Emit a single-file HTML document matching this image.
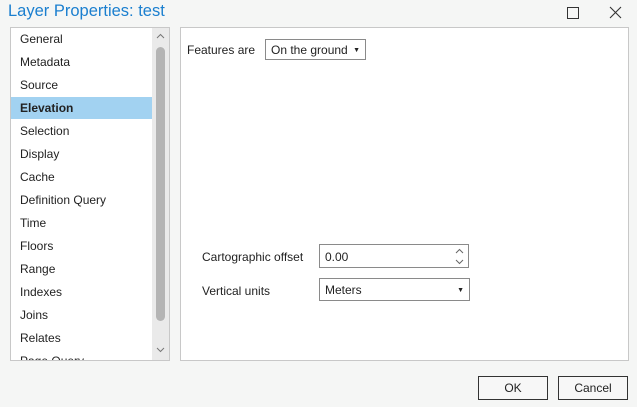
<!DOCTYPE html>
<html><head><style>
body{margin:0;width:637px;height:407px;background:#f5f6f5;font-family:"Liberation Sans",sans-serif;font-size:12px;color:#222;position:relative;overflow:hidden}
.a{position:absolute}
.title{left:8px;top:2px;font-size:16.5px;color:#1b7fcf}
.lp{left:10px;top:27px;width:158px;height:332px;border:1px solid #c8c8c8;background:#fff;overflow:hidden}
.it{position:absolute;left:9px;height:22px;line-height:22px;font-size:12px}
.sel{left:0;width:141px;background:#a2d2f1;font-weight:bold}
.sb{left:141px;top:0;width:17px;height:332px;background:#eaeaea}
.th{left:4px;top:19px;width:9px;height:274px;background:#b4b4b4;border-radius:5px}
.rp{left:180px;top:27px;width:447px;height:332px;border:1px solid #c8c8c8;background:#fff}
.box{border:1px solid #8a8a8a;background:#fff;height:21px;line-height:21px;padding-left:5px;box-sizing:border-box}
.btn{border:1px solid #333;background:#f7f7f7;width:70px;height:24px;line-height:22px;text-align:center;box-sizing:border-box}
</style></head><body>
<div class="a title">Layer Properties: test</div>
<div class="a" style="left:567px;top:7px;width:10px;height:10px;border:1px solid #333"></div>
<svg class="a" style="left:609px;top:6px" width="13" height="13"><path d="M1 1L12 12M12 1L1 12" stroke="#333" stroke-width="1.1"/></svg>
<div class="a lp">
<div class="it" style="top:0">General</div>
<div class="it" style="top:23px">Metadata</div>
<div class="it" style="top:46px">Source</div>
<div class="it sel" style="top:69px;padding-left:9px">Elevation</div>
<div class="it" style="top:92px">Selection</div>
<div class="it" style="top:115px">Display</div>
<div class="it" style="top:138px">Cache</div>
<div class="it" style="top:161px">Definition Query</div>
<div class="it" style="top:184px">Time</div>
<div class="it" style="top:207px">Floors</div>
<div class="it" style="top:230px">Range</div>
<div class="it" style="top:253px">Indexes</div>
<div class="it" style="top:276px">Joins</div>
<div class="it" style="top:299px">Relates</div>
<div class="it" style="top:322px">Page Query</div>
<div class="a sb"><div class="a th"></div>
<svg class="a" style="left:4px;top:5px" width="9" height="6"><path d="M1 5L4.5 1.5L8 5" stroke="#777" fill="none"/></svg>
<svg class="a" style="left:4px;top:319px" width="9" height="6"><path d="M1 1L4.5 4.5L8 1" stroke="#777" fill="none"/></svg>
</div>
</div>
<div class="a rp"></div>
<div class="a" style="left:187px;top:43px">Features are</div>
<div class="a box" style="left:265px;top:39px;width:101px">On the ground<span style="position:absolute;right:5px;font-size:7px">▼</span></div>
<div class="a" style="left:202px;top:250px">Cartographic offset</div>
<div class="a box" style="left:319px;top:244px;width:150px;height:24px;line-height:24px">0.00
<svg class="a" style="right:4px;top:3px" width="9" height="17"><path d="M1 5L4.5 1.5L8 5M1 12L4.5 15.5L8 12" stroke="#666" fill="none"/></svg></div>
<div class="a" style="left:202px;top:284px">Vertical units</div>
<div class="a box" style="left:319px;top:278px;width:151px;height:23px;line-height:23px">Meters<span style="position:absolute;right:5px;font-size:7px">▼</span></div>
<div class="a btn" style="left:478px;top:376px">OK</div>
<div class="a btn" style="left:558px;top:376px">Cancel</div>
</body></html>
